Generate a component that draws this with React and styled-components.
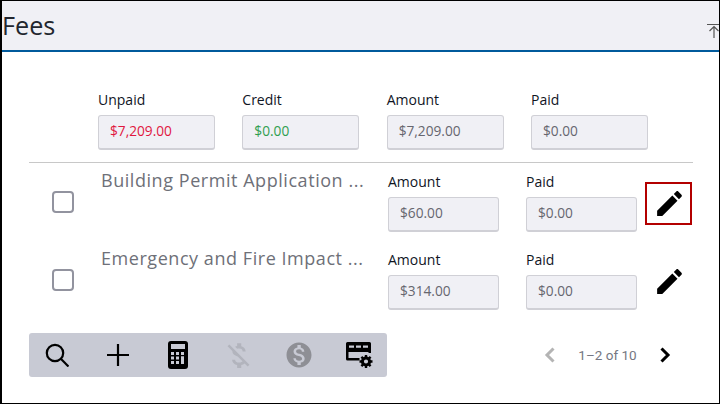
import React from 'react';
import styled, { createGlobalStyle } from 'styled-components';

const Global = createGlobalStyle`
  * { box-sizing: border-box; }
  html, body { margin: 0; padding: 0; background: #fff; }
  body { font-family: "Open Sans", "Liberation Sans", sans-serif; }
`;

const Frame = styled.div`
  width: 720px;
  height: 404px;
  overflow: hidden;
  background: #fff;
  border: 1px solid #000;
  border-left-width: 2px;
`;

const Header = styled.header`
  height: 51px;
  display: flex;
  align-items: center;
  justify-content: space-between;
  background: #f0f0f5;
  border-bottom: 2px solid #005a9c;
`;

const Title = styled.h1`
  margin: 0 0 1px;
  font-size: 25.2px;
  font-weight: 400;
  color: #22262e;
`;

const Collapse = styled.svg`
  width: 16px;
  height: 16px;
  margin: 0 -3px 0 0;
  flex: none;
  position: relative;
  top: 5px;
`;

const Summary = styled.section`
  display: grid;
  grid-template-columns: repeat(4, 117px);
  column-gap: 27.33px;
  margin: 38px 26px 0 27px;
  padding: 0 0 12px 69px;
  border-bottom: 1px solid #c8c8c8;
`;

const Field = styled.div`
  display: flex;
  flex-direction: column;
  gap: 6px;
`;

const Label = styled.label`
  font-size: 14px;
  line-height: 19px;
  font-weight: 500;
  color: #10151f;
`;

const Value = styled.div`
  height: 35px;
  display: flex;
  align-items: center;
  padding: 0 0 4px 11px;
  font-size: 13.7px;
  color: ${(p) => p.$color || '#66666f'};
  background: #f0f0f5;
  border: 1px solid #d0d0d6;
  border-bottom-width: 2px;
  border-radius: 3px;
`;

const RowList = styled.div`
  padding: 5px 0 0 0;
`;

const Row = styled.div`
  height: 78px;
  display: grid;
  grid-template-columns: 49px 22px 27px 287px 111px 27px 111px 8px 47px;
  margin-left: 1px;
  align-items: start;
`;

const Box = styled.span`
  grid-column: 2;
  width: 22px;
  height: 22px;
  margin-top: 23px;
  border: 2px solid #92939f;
  border-radius: 4px;
  background: #fff;
`;

const FeeName = styled.div`
  grid-column: 4;
  width: 263px;
  font-size: 18px;
  line-height: 24px;
  letter-spacing: 0.55px;
  color: #6e7078;
  white-space: nowrap;
`;

const RowField = styled(Field)`
  grid-column: ${(p) => p.$col};
  margin-top: 4px;
`;

const EditButton = styled.button`
  grid-column: 9;
  width: 47px;
  height: 43px;
  margin-top: 14px;
  padding: 0 0 0 2px;
  display: flex;
  align-items: center;
  justify-content: center;
  background: transparent;
  border: 2px solid ${(p) => (p.$focused ? '#b30000' : 'transparent')};
`;

const Footer = styled.footer`
  display: flex;
  align-items: center;
  justify-content: space-between;
  margin: 9px 0 0 27px;
`;

const Toolbar = styled.div`
  width: 358px;
  height: 44px;
  display: grid;
  grid-template-columns: repeat(6, 56px);
  column-gap: 4.5px;
  align-items: center;
  justify-items: center;
  background: #c8cad4;
  border-radius: 3px;
`;

const Pager = styled.nav`
  display: flex;
  align-items: center;
  margin-right: 47px;
`;

const PageText = styled.span`
  width: 101px;
  text-align: center;
  font-family: "Roboto", "Liberation Sans", sans-serif;
  font-size: 13.5px;
  color: #757782;
`;

const EditIcon = () => (
  <svg width="33" height="33" viewBox="0 0 24 24" fill="#000">
    <path d="M3 17.25V21h3.75L17.81 9.94l-3.75-3.75L3 17.25zM20.71 7.04c.39-.39.39-1.02 0-1.41l-2.34-2.34c-.39-.39-1.02-.39-1.41 0l-1.83 1.83 3.75 3.75 1.83-1.83z" />
  </svg>
);

const SearchIcon = () => (
  <svg width="24" height="24" viewBox="0 0 24 24" fill="none" stroke="#000" strokeWidth="2.2">
    <circle cx="10" cy="10" r="8.2" />
    <path d="M15.8 15.8 23.500 23.500" />
  </svg>
);

const PlusIcon = () => (
  <svg width="22" height="22" viewBox="0 0 22 22" fill="none" stroke="#000" strokeWidth="2.2">
    <path d="M11 0v22M0 11h22" />
  </svg>
);

const CalcIcon = () => (
  <svg width="20" height="28" viewBox="0 0 20 28">
    <rect width="20" height="28" rx="3" fill="#000" />
    <rect x="3" y="3" width="14" height="5" fill="#c8cad4" />
    {[11, 15.5, 20].map((y) =>
      [3, 8, 13].map((x) => (
        <rect key={`${x}-${y}`} x={x} y={y} width="3" height="3" fill="#c8cad4" />
      ))
    )}
    <rect x="13" y="15.5" width="3" height="7.5" fill="#c8cad4" />
  </svg>
);

const NoDollarIcon = () => (
  <svg width="33" height="33" viewBox="0 0 24 24" fill="#b2b4bd">
    <path d="M12.5 6.9c1.78 0 2.44.85 2.5 2.1h2.21c-.07-1.72-1.12-3.3-3.21-3.81V3h-3v2.16c-.53.12-1.03.3-1.48.54l1.47 1.47c.41-.17.91-.27 1.51-.27zM5.33 4.06 4.06 5.33 7.5 8.77c0 2.08 1.56 3.21 3.91 3.91l3.51 3.51c-.34.48-1.05.91-2.42.91-2.06 0-2.87-.92-2.98-2.1h-2.2c.12 2.19 1.76 3.42 3.68 3.83V21h3v-2.15c.96-.18 1.83-.55 2.46-1.12l2.22 2.22 1.27-1.27L5.33 4.06z" />
  </svg>
);

const DollarIcon = () => (
  <svg width="30" height="30" viewBox="0 0 24 24" fill="#8e8f95">
    <path d="M12 2C6.48 2 2 6.48 2 12s4.48 10 10 10 10-4.48 10-10S17.52 2 12 2zm1.41 16.09V20h-2.67v-1.93c-1.71-.36-3.16-1.46-3.27-3.4h1.96c.1 1.05.82 1.87 2.65 1.87 1.96 0 2.4-.98 2.4-1.59 0-.83-.44-1.61-2.67-2.14-2.48-.6-4.18-1.62-4.18-3.67 0-1.72 1.39-2.84 3.11-3.21V4h2.67v1.95c1.86.45 2.79 1.86 2.85 3.39H14.3c-.05-1.11-.64-1.87-2.22-1.87-1.5 0-2.4.68-2.4 1.64 0 .84.65 1.39 2.67 1.91s4.18 1.39 4.18 3.91c-.01 1.83-1.38 2.83-3.12 3.16z" />
  </svg>
);

const TableGearIcon = () => (
  <svg width="27" height="27" viewBox="0 0 27 27">
    <path d="M1.500 0h22A1.500 1.500 0 0 1 25 1.500V11h-2.500V10h-20v6h11v2.500h-12A1.500 1.500 0 0 1 0 17V1.500A1.500 1.500 0 0 1 1.500 0z" fill="#000" />
    <path d="M3 3.500h5v2.200H3zM10 3.500h5v2.200h-5zM17 3.500h5v2.200h-5z" fill="#c8cad4" />
    <circle cx="20" cy="19.500" r="3.600" fill="none" stroke="#000" strokeWidth="3" />
    <path d="M20 13v3M20 23v3M13.500 19.500h3M23.500 19.500h3M15.400 14.900l2.100 2.100M22.500 22 24.600 24.100M24.600 14.900 22.500 17M17.500 22l-2.100 2.100" stroke="#000" strokeWidth="2.400" />
  </svg>
);

const Chevron = ({ dir, color }) => (
  <svg width="14" height="18" viewBox="0 0 14 18" fill="none" stroke={color} strokeWidth="3">
    <path d={dir === 'left' ? 'M10.500 2.500 4 9l6.500 6.500' : 'M3.500 2.500 10 9l-6.500 6.500'} />
  </svg>
);

const fees = [
  { name: 'Building Permit Application ...', amount: '$60.00', focused: true },
  { name: 'Emergency and Fire Impact ...', amount: '$314.00' },
];

export default function App() {
  return (
    <Frame>
      <Global />
      <Header>
        <Title>Fees</Title>
        <Collapse viewBox="0 0 16 16" fill="none" stroke="#555" strokeWidth="1.200">
          <path d="M1 1.500h15M8 15V4M3.500 8 8 3.500 12.500 8" />
        </Collapse>
      </Header>
      <Summary>
        <Field>
          <Label>Unpaid</Label>
          <Value $color="#e0173f">$7,209.00</Value>
        </Field>
        <Field>
          <Label>Credit</Label>
          <Value $color="#2f9e4f">$0.00</Value>
        </Field>
        <Field>
          <Label>Amount</Label>
          <Value>$7,209.00</Value>
        </Field>
        <Field>
          <Label>Paid</Label>
          <Value>$0.00</Value>
        </Field>
      </Summary>
      <RowList>
        {fees.map((fee) => (
          <Row key={fee.name}>
            <Box />
            <FeeName>{fee.name}</FeeName>
            <RowField $col={5}>
              <Label>Amount</Label>
              <Value>{fee.amount}</Value>
            </RowField>
            <RowField $col={7}>
              <Label>Paid</Label>
              <Value>$0.00</Value>
            </RowField>
            <EditButton $focused={fee.focused} aria-label="Edit">
              <EditIcon />
            </EditButton>
          </Row>
        ))}
      </RowList>
      <Footer>
        <Toolbar>
          <SearchIcon />
          <PlusIcon />
          <CalcIcon />
          <NoDollarIcon />
          <DollarIcon />
          <TableGearIcon />
        </Toolbar>
        <Pager>
          <Chevron dir="left" color="#b4b4b4" />
          <PageText>1–2 of 10</PageText>
          <Chevron dir="right" color="#000" />
        </Pager>
      </Footer>
    </Frame>
  );
}
